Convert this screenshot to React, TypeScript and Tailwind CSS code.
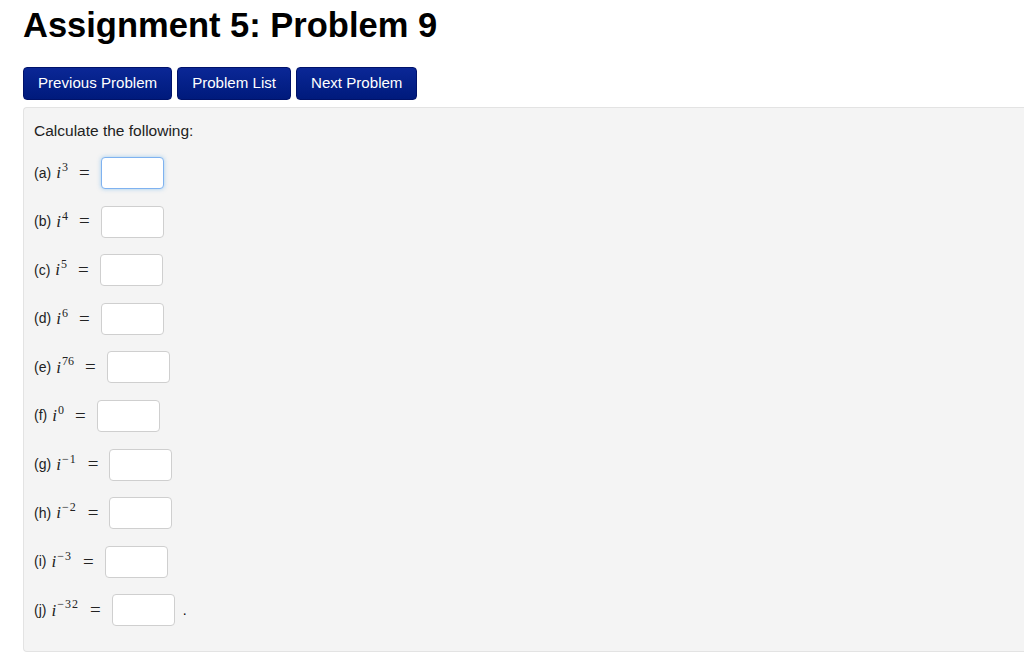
const sans = { fontFamily: '"Liberation Sans", Arial, sans-serif' };

type Row = { tag: string; exp: string };

const rows: Row[] = [
  { tag: "a", exp: "3" },
  { tag: "b", exp: "4" },
  { tag: "c", exp: "5" },
  { tag: "d", exp: "6" },
  { tag: "e", exp: "76" },
  { tag: "f", exp: "0" },
  { tag: "g", exp: "\u22121" },
  { tag: "h", exp: "\u22122" },
  { tag: "i", exp: "\u22123" },
  { tag: "j", exp: "\u221232" },
];

function NavButton({ label }: { label: string }) {
  return (
    <button className="h-[33px] rounded-[4px] border border-[#00126a] bg-gradient-to-b from-[#0b2796] to-[#001a7c] px-[14px] text-[15.1px] text-white">
      {label}
    </button>
  );
}

function ProblemRow({ row, first, last }: { row: Row; first: boolean; last: boolean }) {
  const neg = row.exp.startsWith("\u2212");
  return (
    <div className="flex h-[32px] items-center">
      <span className="text-[14px] text-[#222]">({row.tag})</span>
      <span className="ml-[5px] font-['Liberation_Serif',serif] text-[17px] italic text-[#222]">i</span>
      <span
        className={
          "relative -top-[6px] ml-[1px] font-['Liberation_Serif',serif] text-[12px] text-[#222] " +
          (neg ? "tracking-[1px]" : "")
        }
      >
        {row.exp}
      </span>
      <span className="ml-[11px] mr-[11px] font-['Liberation_Serif',serif] text-[19px] text-[#222]">=</span>
      <input
        className={
          "h-[32px] w-[63px] rounded-[4px] border bg-white outline-none " +
          (first
            ? "border-[#7fb2f0] shadow-[0_0_4px_rgba(82,168,236,0.5)]"
            : "border-[#cfcfcf]")
        }
      />
      {last && <span className="ml-[8px] text-[14px]">.</span>}
    </div>
  );
}

export default function App() {
  return (
    <div className="min-h-[664px] bg-white pl-[23px] text-black" style={sans}>
      <h1 className="pt-[5px] text-[34.5px] font-bold leading-[40px]">Assignment 5: Problem 9</h1>
      <div className="mt-[22px] flex gap-[5px]">
        <NavButton label="Previous Problem" />
        <NavButton label="Problem List" />
        <NavButton label="Next Problem" />
      </div>
      <div className="mt-[7px] rounded-l-[4px] border border-r-0 border-[#e3e3e3] bg-[#f4f4f4] pb-[25px] pl-[10px] pt-[12px]">
        <p className="text-[15.5px] leading-[22px] text-[#222]">Calculate the following:</p>
        <div className="mt-[15px] flex flex-col gap-[16.6px]">
          {rows.map((r, i) => (
            <ProblemRow key={r.tag} row={r} first={i === 0} last={i === rows.length - 1} />
          ))}
        </div>
      </div>
    </div>
  );
}
